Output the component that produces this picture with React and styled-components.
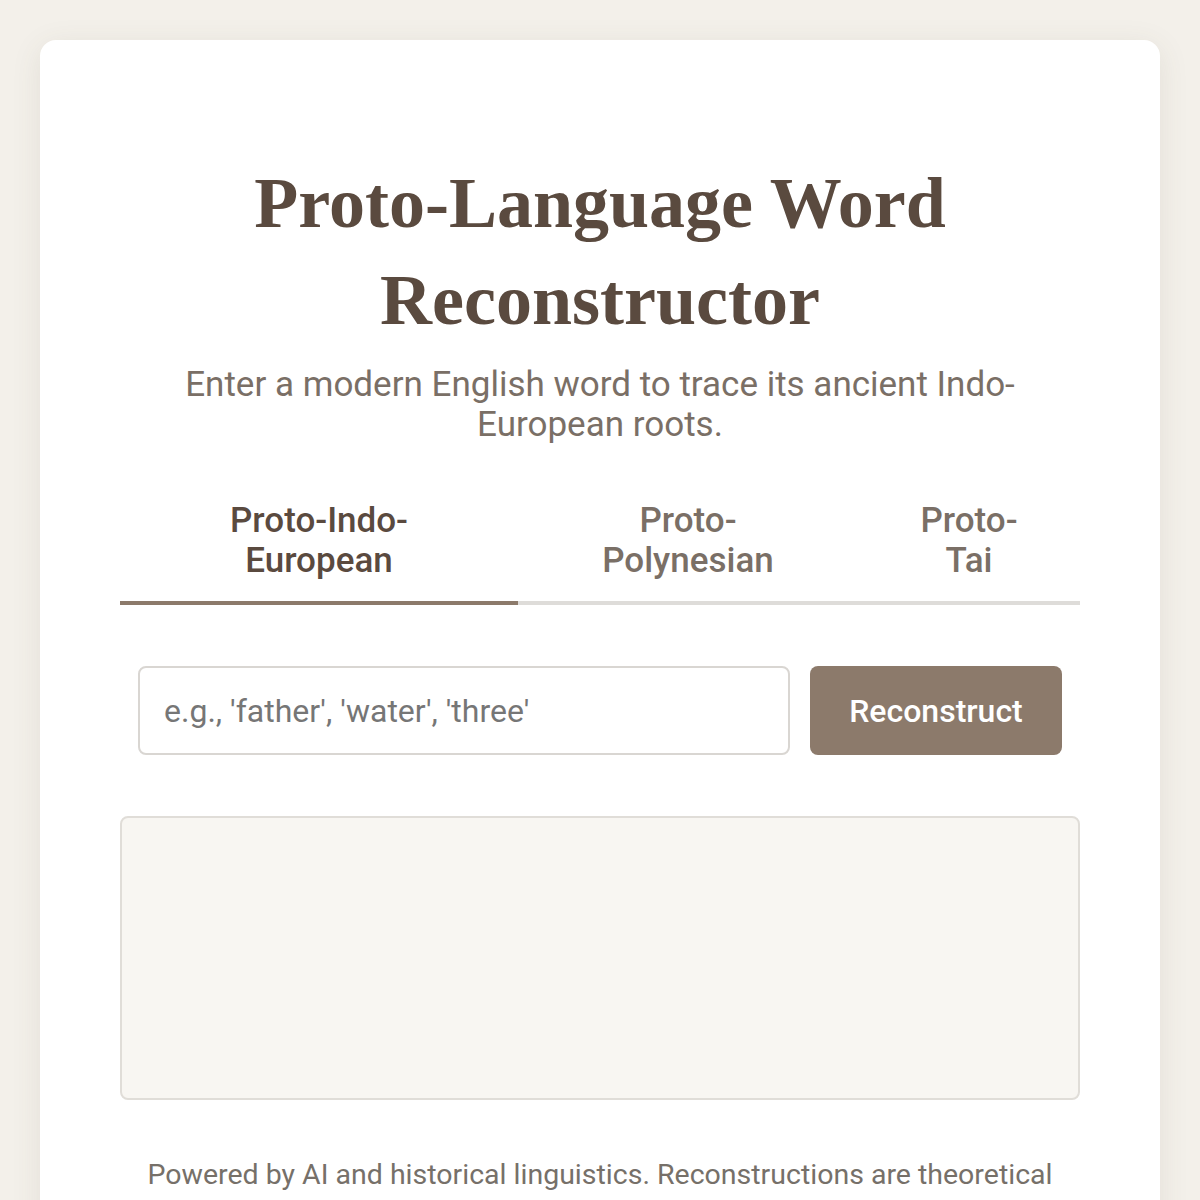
import React, { useState } from "react";
import styled, { createGlobalStyle } from "styled-components";

const GlobalStyle = createGlobalStyle`
  html, body {
    margin: 0;
    padding: 0;
    background: #f3f0ea;
    font-family: Roboto, "Liberation Sans", sans-serif;
  }
  * {
    box-sizing: border-box;
  }
`;

const Page = styled.div`
  padding: 40px;
  min-height: 1200px;
`;

const Card = styled.main`
  background: #ffffff;
  border-radius: 16px;
  box-shadow: 0 6px 30px rgba(90, 74, 63, 0.1);
  padding: 115px 80px 60px;
`;

const Title = styled.h1`
  margin: 0;
  font-family: "Liberation Serif", "Times New Roman", serif;
  font-weight: 700;
  font-size: 72px;
  line-height: 97px;
  color: #5a4a3f;
  text-align: center;
`;

const Subtitle = styled.p`
  margin: 16px 0 0;
  font-size: 35px;
  line-height: 40px;
  color: #7a6f66;
  text-align: center;
`;

const Tabs = styled.div`
  display: flex;
  margin-top: 48px;
  border-bottom: 4px solid #dedcd9;
`;

const Tab = styled.button`
  flex: 0 0 ${(p) => p.$width}px;
  margin-bottom: -4px;
  padding: 8px 56px 20px;
  background: none;
  border: none;
  border-bottom: 4px solid ${(p) => (p.$active ? "#8c7a6b" : "transparent")};
  font-family: Roboto, "Liberation Sans", sans-serif;
  font-size: 35px;
  font-weight: 500;
  line-height: 40px;
  color: ${(p) => (p.$active ? "#5a4a3f" : "#7a6f66")};
  cursor: pointer;
`;

const InputRow = styled.form`
  display: flex;
  gap: 20px;
  padding: 0 18px;
  margin-top: 61px;
`;

const WordInput = styled.input`
  flex: 1;
  height: 89px;
  padding: 0 24px;
  border: 2px solid #d9d6d2;
  border-radius: 8px;
  font-family: Roboto, "Liberation Sans", sans-serif;
  font-size: 32px;
  color: #5a4a3f;
  outline: none;

  &::placeholder {
    color: #767676;
  }
`;

const Button = styled.button`
  width: 252px;
  height: 89px;
  border: none;
  border-radius: 8px;
  background: #8c7a6b;
  color: #ffffff;
  font-family: Roboto, "Liberation Sans", sans-serif;
  font-size: 32px;
  font-weight: 500;
  cursor: pointer;
`;

const Result = styled.section`
  margin-top: 61px;
  height: 284px;
  background: #f8f6f2;
  border: 2px solid #e0ddd8;
  border-radius: 8px;
`;

const Footer = styled.p`
  margin: 56px 0 0;
  padding: 0 20px;
  font-size: 28.5px;
  line-height: 38px;
  color: #767069;
  text-align: center;
`;

const tabs = [
  { id: "pie", label: "Proto-Indo-European", width: 398 },
  { id: "pp", label: "Proto-Polynesian", width: 340 },
  { id: "pt", label: "Proto-Tai", width: 222 },
];

export default function App() {
  const [active, setActive] = useState("pie");
  const [word, setWord] = useState("");

  return (
    <Page>
      <GlobalStyle />
      <Card>
        <Title>Proto-Language Word Reconstructor</Title>
        <Subtitle>
          Enter a modern English word to trace its ancient Indo-European roots.
        </Subtitle>
        <Tabs>
          {tabs.map((t) => (
            <Tab
              key={t.id}
              $width={t.width}
              $active={active === t.id}
              onClick={() => setActive(t.id)}
            >
              {t.label}
            </Tab>
          ))}
        </Tabs>
        <InputRow onSubmit={(e) => e.preventDefault()}>
          <WordInput
            value={word}
            onChange={(e) => setWord(e.target.value)}
            placeholder="e.g., 'father', 'water', 'three'"
          />
          <Button type="submit">Reconstruct</Button>
        </InputRow>
        <Result />
        <Footer>
          Powered by AI and historical linguistics. Reconstructions are
          theoretical and may vary.
        </Footer>
      </Card>
    </Page>
  );
}
